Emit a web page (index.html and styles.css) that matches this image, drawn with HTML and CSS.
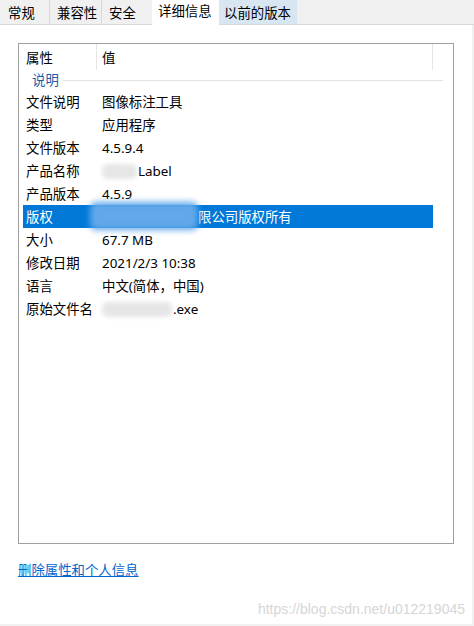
FILE: index.html
```html
<!DOCTYPE html>
<html lang="zh-CN">
<head>
    <meta charset="UTF-8">
    <title>属性 - 详细信息</title>
    <link rel="stylesheet" href="styles.css">
</head>
<body>
    <div class="tabs">
        <div class="tab tab-general">常规</div>
        <div class="tab tab-compat">兼容性</div>
        <div class="tab tab-security">安全</div>
        <div class="tab tab-details active">详细信息</div>
        <div class="tab tab-previous hover">以前的版本</div>
    </div>
    <div class="panel">
        <div class="list">
            <div class="list-head">
                <div class="head-cell head-name">属性</div>
                <div class="head-cell head-value">值</div>
            </div>
            <div class="group">
                <span class="group-title">说明</span>
                <span class="group-line"></span>
            </div>
            <div class="row"><span class="name">文件说明</span><span class="value">图像标注工具</span></div>
            <div class="row"><span class="name">类型</span><span class="value">应用程序</span></div>
            <div class="row"><span class="name">文件版本</span><span class="value">4.5.9.4</span></div>
            <div class="row"><span class="name">产品名称</span><span class="value"><span class="blur blur-name"></span>Label</span></div>
            <div class="row"><span class="name">产品版本</span><span class="value">4.5.9</span></div>
            <div class="row selected"><span class="name">版权</span><span class="value"><span class="blur blur-copy"></span>限公司版权所有</span></div>
            <div class="row"><span class="name">大小</span><span class="value">67.7 MB</span></div>
            <div class="row"><span class="name">修改日期</span><span class="value">2021/2/3 10:38</span></div>
            <div class="row"><span class="name">语言</span><span class="value">中文(简体，中国)</span></div>
            <div class="row"><span class="name">原始文件名</span><span class="value"><span class="blur blur-file"></span>.exe</span></div>
        </div>
        <a class="remove-link" href="#">删除属性和个人信息</a>
        <div class="watermark">https://blog.csdn.net/u012219045</div>
    </div>
</body>
</html>
```

FILE: styles.css
```css
body, html {
    margin: 0;
    padding: 0;
    background-color: #f0f0f0;
    font-family: "Noto Sans", "Noto Sans CJK SC", sans-serif;
    font-size: 13.4px;
    color: #000;
    width: 474px;
    height: 626px;
    overflow: hidden;
}

.tabs {
    display: flex;
    height: 24px;
    border-bottom: 1px solid #d9d9d9;
}

.tab {
    box-sizing: border-box;
    height: 24px;
    line-height: 26px;
    padding-left: 7px;
    border-right: 1px solid #d9d9d9;
    white-space: nowrap;
}

.tab-general { width: 50px; padding-left: 8px; }
.tab-compat { width: 52px; }
.tab-security { width: 50px; border-right: none; }
.tab-details { width: 67px; }
.tab-previous { width: 78px; padding-left: 5px; }

.tab.active {
    background-color: #fff;
    height: 25px;
    margin-bottom: -1px;
    line-height: 22px;
    padding-left: 6px;
    border-right: none;
}

.tab.hover {
    background-color: #d8e6f2;
    border-right: none;
}

.panel {
    width: 472px;
    height: 599px;
    background-color: #fff;
    box-sizing: border-box;
    padding: 18px 0 0 18px;
    display: flex;
    flex-direction: column;
}

.list {
    box-sizing: border-box;
    width: 436px;
    height: 501px;
    border: 1px solid #a0a0a0;
    padding: 0 0 0 4px;
}

.list-head {
    display: flex;
    height: 26px;
    margin-left: -4px;
}

.head-cell {
    line-height: 28px;
    box-sizing: border-box;
    border-right: 1px solid #e5e5e5;
    height: 26px;
}

.head-name {
    width: 78px;
    padding-left: 7px;
}

.head-value {
    width: 336px;
    padding-left: 5px;
}

.group {
    display: flex;
    align-items: center;
    height: 20px;
    padding-left: 9px;
}

.group-title {
    color: #1e5aa8;
    line-height: 22px;
    margin-right: 4px;
}

.group-line {
    flex: 1;
    height: 1px;
    background-color: #e3e3e3;
    margin-right: 10px;
}

.row {
    display: flex;
    align-items: center;
    box-sizing: border-box;
    width: 410px;
    height: 23px;
    line-height: 23px;
    padding-top: 2px;
    white-space: nowrap;
}

.row .name {
    width: 79px;
    padding-left: 3px;
    box-sizing: border-box;
}

.row .value {
    display: flex;
    align-items: center;
}

.row.selected {
    background-color: #0078d7;
    color: #fff;
}

.blur {
    display: inline-block;
    border-radius: 6px;
    filter: blur(2px);
}

.blur-name {
    width: 35px;
    height: 15px;
    margin-right: 1px;
    background-color: #e6e6e6;
}

.blur-copy {
    width: 108px;
    height: 28px;
    margin: -4px 0 0 -12px;
    background-color: #62a8ea;
    filter: blur(3px);
}

.blur-file {
    width: 70px;
    height: 15px;
    margin-right: 1px;
    background-color: #e6e6e6;
}

.remove-link {
    margin-top: 17px;
    align-self: flex-start;
    color: #0066cc;
    line-height: 18px;
}

.watermark {
    margin-top: auto;
    margin-bottom: 6px;
    align-self: flex-end;
    margin-right: 7px;
    font-family: "Liberation Sans", sans-serif;
    font-size: 14px;
    color: #d6d6d6;
    line-height: 18px;
}
```
